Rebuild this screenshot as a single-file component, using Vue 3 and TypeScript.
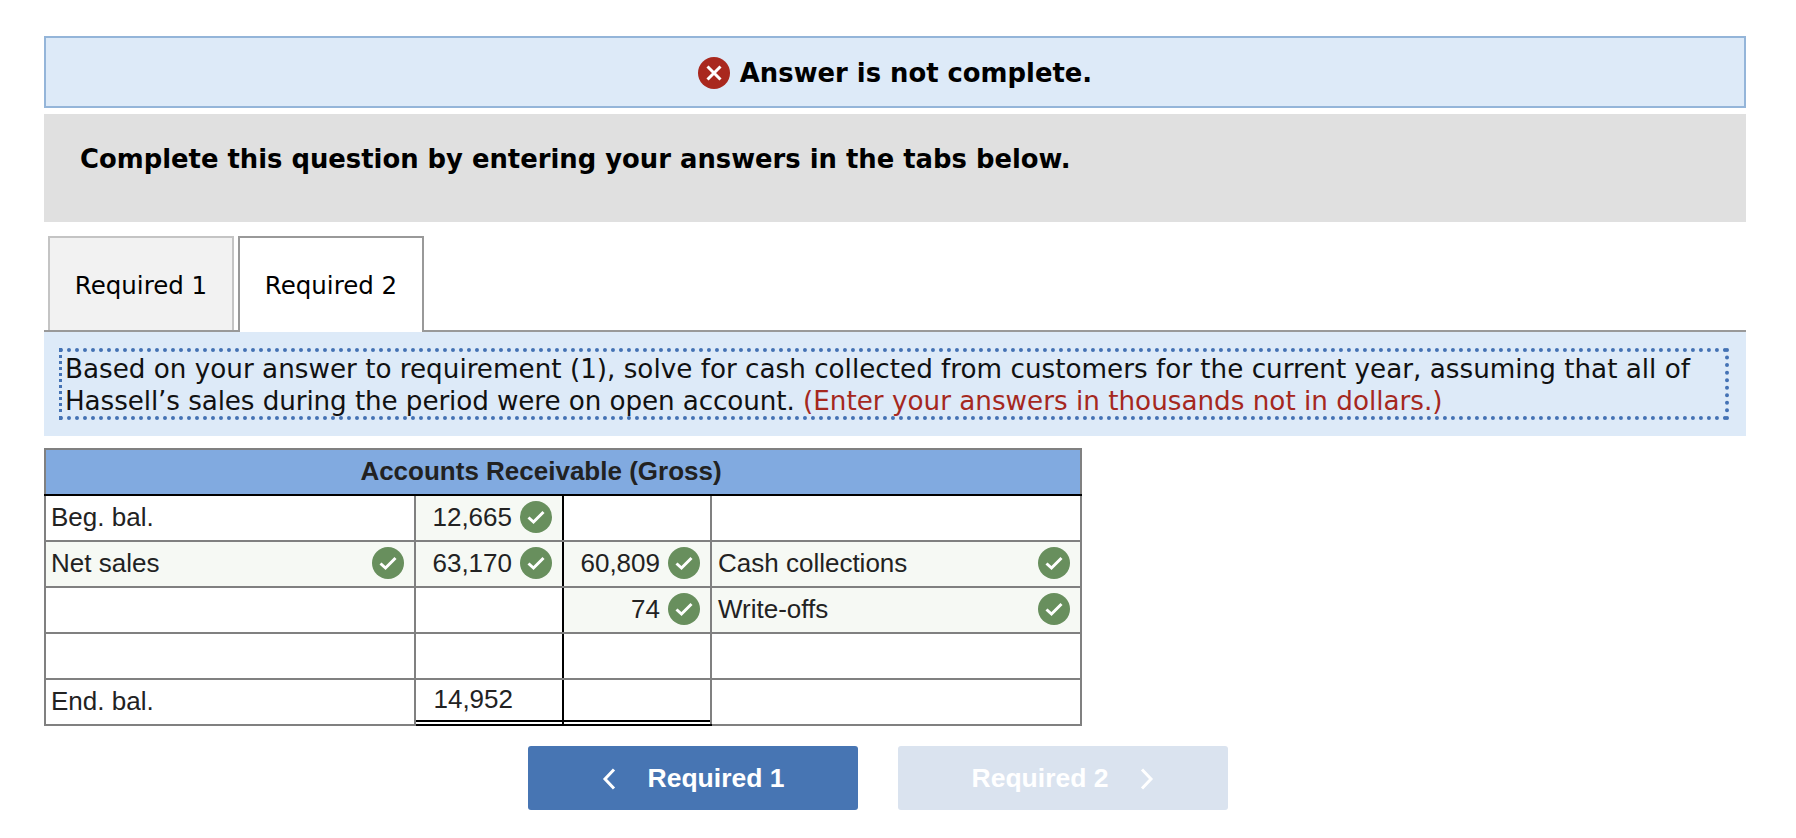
<script setup lang="ts">
interface Cell {
  text?: string
  ok?: boolean
  tint?: boolean
}

interface Row {
  left: Cell
  debit: Cell
  credit: Cell
  right: Cell
  total?: boolean
}

const rows: Row[] = [
  { left: { text: 'Beg. bal.' }, debit: { text: '12,665', ok: true, tint: true }, credit: {}, right: {} },
  {
    left: { text: 'Net sales', ok: true, tint: true },
    debit: { text: '63,170', ok: true, tint: true },
    credit: { text: '60,809', ok: true, tint: true },
    right: { text: 'Cash collections', ok: true, tint: true },
  },
  {
    left: {},
    debit: {},
    credit: { text: '74', ok: true, tint: true },
    right: { text: 'Write-offs', ok: true, tint: true },
  },
  { left: {}, debit: {}, credit: {}, right: {} },
  { left: { text: 'End. bal.' }, debit: { text: '14,952' }, credit: {}, right: {}, total: true },
]
</script>

<template>
  <div class="page">
    <div class="banner">
      <svg class="err-icon" width="32" height="32" viewBox="0 0 32 32">
        <circle cx="16" cy="16" r="16" fill="#a9281e" />
        <path d="M9.5 9.5 22.5 22.5M22.5 9.5 9.5 22.5" stroke="#fff" stroke-width="3" />
      </svg>
      <span>Answer is not complete.</span>
    </div>

    <div class="instructions">Complete this question by entering your answers in the tabs below.</div>

    <div class="tabs">
      <div class="tab">Required 1</div>
      <div class="tab active">Required 2</div>
    </div>

    <div class="prompt">
      <div class="prompt-box">
        Based on your answer to requirement (1), solve for cash collected from customers for the current year, assuming that all of
        <span class="tight">Hassell’s sales during the period were on open account.</span>{{ ' ' }}<span class="red">(Enter your answers in thousands not in dollars.)</span>
      </div>
    </div>

    <table class="ledger">
      <colgroup>
        <col class="c-left" />
        <col class="c-num" />
        <col class="c-num" />
        <col class="c-right" />
      </colgroup>
      <thead>
        <tr>
          <th colspan="4">Accounts Receivable (Gross)</th>
        </tr>
      </thead>
      <tbody>
        <tr v-for="(row, i) in rows" :key="i" :class="{ total: row.total }">
          <td :class="{ tint: row.left.tint }">
            <div class="cell">
              <span>{{ row.left.text }}</span>
              <svg v-if="row.left.ok" class="check" viewBox="0 0 32 32">
                <circle cx="16" cy="16" r="16" fill="#688f5d" />
                <path d="M8.5 16.5 13.5 21 23.5 11" fill="none" stroke="#fff" stroke-width="3" />
              </svg>
            </div>
          </td>
          <td class="num debit" :class="{ tint: row.debit.tint }">
            <div class="cell end" :class="{ bare: row.debit.text && !row.debit.ok }">
              <span>{{ row.debit.text }}</span>
              <svg v-if="row.debit.ok" class="check" viewBox="0 0 32 32">
                <circle cx="16" cy="16" r="16" fill="#688f5d" />
                <path d="M8.5 16.5 13.5 21 23.5 11" fill="none" stroke="#fff" stroke-width="3" />
              </svg>
            </div>
          </td>
          <td class="num credit" :class="{ tint: row.credit.tint }">
            <div class="cell end">
              <span>{{ row.credit.text }}</span>
              <svg v-if="row.credit.ok" class="check" viewBox="0 0 32 32">
                <circle cx="16" cy="16" r="16" fill="#688f5d" />
                <path d="M8.5 16.5 13.5 21 23.5 11" fill="none" stroke="#fff" stroke-width="3" />
              </svg>
            </div>
          </td>
          <td class="right" :class="{ tint: row.right.tint }">
            <div class="cell">
              <span>{{ row.right.text }}</span>
              <svg v-if="row.right.ok" class="check" viewBox="0 0 32 32">
                <circle cx="16" cy="16" r="16" fill="#688f5d" />
                <path d="M8.5 16.5 13.5 21 23.5 11" fill="none" stroke="#fff" stroke-width="3" />
              </svg>
            </div>
          </td>
        </tr>
      </tbody>
    </table>

    <div class="nav">
      <button class="nav-btn prev" type="button">
        <svg width="14" height="22" viewBox="0 0 14 22">
          <path d="M12 1.5 3 11l9 9.5" fill="none" stroke="#fff" stroke-width="3" />
        </svg>
        <span>Required 1</span>
      </button>
      <button class="nav-btn next" type="button" disabled>
        <span>Required 2</span>
        <svg width="14" height="22" viewBox="0 0 14 22">
          <path d="M2 1.5 11 11l-9 9.5" fill="none" stroke="#fff" stroke-width="3" />
        </svg>
      </button>
    </div>
  </div>
</template>

<style scoped>
.page {
  box-sizing: border-box;
  width: 1796px;
  height: 838px;
  padding: 36px 50px 0 44px;
  background: #fff;
  color: #000;
  font-family: "DejaVu Sans", Verdana, sans-serif;
  overflow: hidden;
}

.banner {
  box-sizing: border-box;
  height: 72px;
  display: flex;
  align-items: center;
  justify-content: center;
  gap: 10px;
  padding-top: 2px;
  background: #ddeaf8;
  border: 2px solid #94b5d9;
  font-size: 25.85px;
  font-weight: 700;
}

.err-icon {
  flex: none;
}

.instructions {
  box-sizing: border-box;
  height: 108px;
  margin-top: 6px;
  padding: 29px 36px 0;
  background: #e0e0e0;
  font-size: 25.85px;
  font-weight: 700;
  line-height: 32px;
}

.tabs {
  display: flex;
  gap: 4px;
  height: 94px;
  margin-top: 14px;
  padding-left: 4px;
  border-bottom: 2px solid #999;
}

.tab {
  box-sizing: border-box;
  width: 186px;
  height: 94px;
  display: flex;
  align-items: center;
  justify-content: center;
  background: #f2f2f2;
  border: 2px solid #c4c4c4;
  border-bottom: 0;
  padding-top: 2px;
  font-size: 24.5px;
}

.tab.active {
  height: 96px;
  background: #fff;
  border-color: #999;
  position: relative;
  padding-top: 0;
}

.prompt {
  box-sizing: border-box;
  height: 104px;
  padding: 16px 17px 16px 15px;
  background: #ddeaf8;
}

.prompt-box {
  box-sizing: border-box;
  height: 72px;
  padding: 1px 0 0 3px;
  border: 4px dotted #4472b4;
  border-width: 4px 4px 4px 3px;
  font-size: 26.22px;
  line-height: 32px;
  color: #111;
}

.tight {
  letter-spacing: -0.1px;
}

.red {
  color: #a5281e;
}

.ledger {
  width: 1038px;
  margin-top: 12px;
  border-collapse: collapse;
  table-layout: fixed;
  border: 2px solid #808080;
  font-family: "Liberation Sans", Arial, sans-serif;
  font-size: 26px;
  color: #222;
}

.c-left {
  width: 370px;
}

.c-num {
  width: 148px;
}

th {
  height: 42px;
  padding: 0 44px 2px 0;
  background: #81aae0;
  border-bottom: 2px solid #000;
  font-size: 26px;
  font-weight: 700;
  text-align: center;
}

td {
  height: 44px;
  padding: 0;
  border: 2px solid #808080;
}

td.debit {
  border-right: 2px solid #000;
}

td.credit {
  border-left: 2px solid #000;
}

td.tint {
  background: #f6f9f4;
}

.total td {
  border-top: 2px solid #000;
}

.total td.num {
  border-bottom: 2px solid #000;
  box-shadow: inset 0 -2px 0 #fff, inset 0 -4px 0 #000;
}

.cell {
  box-sizing: border-box;
  height: 44px;
  display: flex;
  align-items: center;
  justify-content: space-between;
  padding: 0 10px 2px 5px;
}

.right .cell {
  padding-left: 6px;
}

.cell.end {
  justify-content: flex-end;
  gap: 8px;
}

.cell.bare {
  padding-right: 49px;
  padding-bottom: 5px;
  height: 39px;
  box-sizing: content-box;
}

.check {
  flex: none;
  width: 32px;
  height: 32px;
}

.nav {
  display: flex;
  justify-content: flex-start;
  gap: 40px;
  margin-top: 20px;
  padding-left: 484px;
}

.nav-btn {
  width: 330px;
  height: 64px;
  display: flex;
  align-items: center;
  justify-content: center;
  gap: 32px;
  padding: 1px 0 0;
  border: 0;
  border-radius: 3px;
  color: #fff;
  font-family: "Liberation Sans", Arial, sans-serif;
  font-size: 26.5px;
  font-weight: 700;
}

.prev {
  background: #4775b3;
}

.next {
  background: #dae3ef;
}
</style>

<style>
html,
body {
  margin: 0;
  background: #fff;
}
</style>
